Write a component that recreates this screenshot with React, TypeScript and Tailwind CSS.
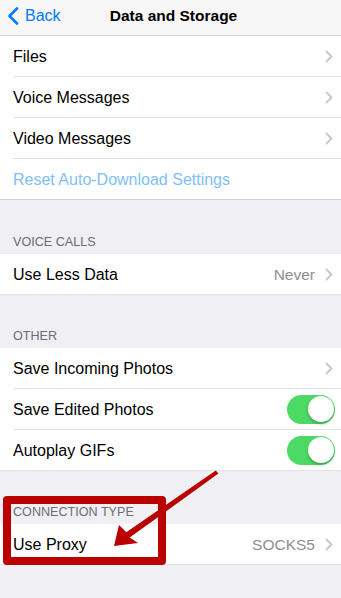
import React from "react";

const Chevron = () => (
  <svg width="8" height="13" viewBox="0 0 8 13" className="shrink-0">
    <path d="M1.5 1.5 L6.5 6.5 L1.5 11.5" fill="none" stroke="#c7c7cc" strokeWidth="1.8" strokeLinecap="round" strokeLinejoin="round" />
  </svg>
);

const Toggle = () => (
  <div className="w-[48px] h-[29px] rounded-full bg-[#4cd964] flex items-center justify-end pr-[1.5px]">
    <div className="w-[26px] h-[26px] rounded-full bg-white shadow-[0_2px_3px_rgba(0,0,0,0.25)]" />
  </div>
);

type RowProps = {
  label: string;
  value?: string;
  chevron?: boolean;
  toggle?: boolean;
  blue?: boolean;
  last?: boolean;
};

const Row = ({ label, value, chevron, toggle, blue, last }: RowProps) => (
  <div className="pl-[13px] bg-white">
    <div
      className={
        "flex items-center justify-between " +
        (toggle ? "pr-[6px] " : "pr-[8px] ") +
        (last ? "h-[40px]" : "h-[41px] border-b border-[#e3e3e6]")
      }
    >
      <span className={"text-[16px] pt-[2px] " + (blue ? "text-[#7fc0f8]" : "text-black")}>{label}</span>
      <div className="flex items-center gap-[10px]">
        {value && <span className="text-[15.5px] pt-[2px] text-[#8e8e93]">{value}</span>}
        {chevron && <Chevron />}
        {toggle && <Toggle />}
      </div>
    </div>
  </div>
);

const Header = ({ title, h }: { title: string; h: string }) => (
  <div className={h + " flex items-end pl-[13px] pb-[4px]"}>
    <span className="text-[12.6px] leading-[15px] text-[#6d6d72] uppercase">{title}</span>
  </div>
);

export default function App() {
  return (
    <div
      className="w-[341px] h-[598px] bg-[#efeff4] relative overflow-hidden"
      style={{ fontFamily: '"Liberation Sans", Arial, sans-serif' }}
    >
      <div className="h-[36px] pb-[3px] bg-[#f7f7f7] border-b border-[#d0d0d4] grid grid-cols-[1fr_auto_1fr] items-center">
        <div className="flex items-center pl-[7px] gap-[6px] text-[#007aff]">
          <svg width="12" height="18" viewBox="0 0 12 18">
            <path d="M10 1.5 L2.5 9 L10 16.5" fill="none" stroke="#007aff" strokeWidth="2.6" strokeLinecap="round" strokeLinejoin="round" />
          </svg>
          <span className="text-[16px]">Back</span>
        </div>
        <div className="text-[15.5px] font-bold text-black pl-[6px]">Data and Storage</div>
        <div />
      </div>

      <div className="border-b border-[#d0d0d4]">
        <Row label="Files" chevron />
        <Row label="Voice Messages" chevron />
        <Row label="Video Messages" chevron />
        <Row label="Reset Auto-Download Settings" blue last />
      </div>

      <Header title="Voice Calls" h="h-[54px]" />
      <div className="border-b border-[#e3e3e6]">
        <Row label="Use Less Data" value="Never" chevron last />
      </div>

      <Header title="Other" h="h-[53px]" />
      <div className="border-b border-[#e3e3e6]">
        <Row label="Save Incoming Photos" chevron />
        <Row label="Save Edited Photos" toggle />
        <Row label="Autoplay GIFs" toggle last />
      </div>

      <Header title="Connection Type" h="h-[53px]" />
      <div className="border-b border-[#e3e3e6]">
        <Row label="Use Proxy" value="SOCKS5" chevron last />
      </div>

      <div className="absolute left-[3px] top-[496px] w-[163px] h-[69px] border-[8px] border-[#bb0000] rounded-[4px]" />
      <svg className="absolute left-0 top-0" width="341" height="598" viewBox="0 0 341 598">
        <polygon
          points="114,546 119,525 126.3,532.3 215.8,470.4 218.4,473.6 129.7,537.6 138,543"
          fill="#bb0000"
        />
      </svg>
    </div>
  );
}
